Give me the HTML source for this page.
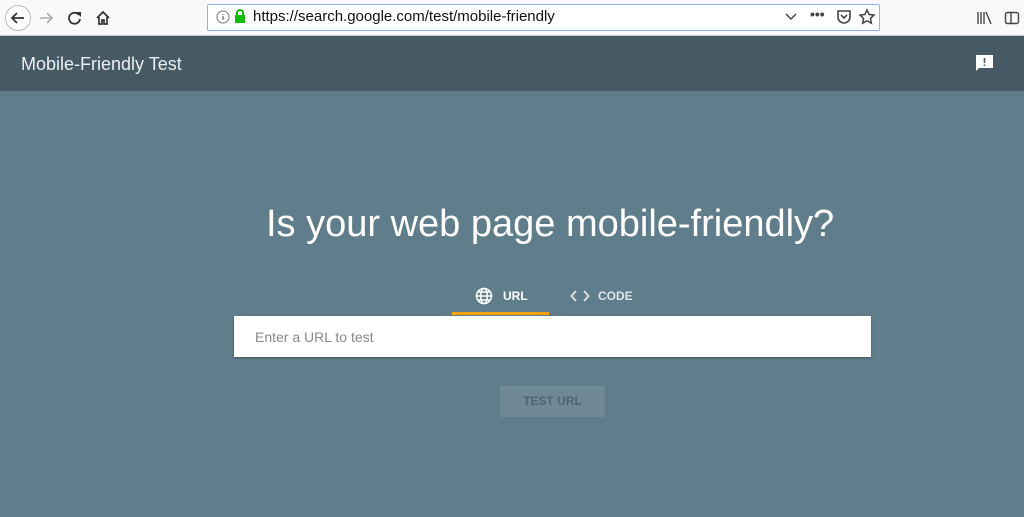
<!DOCTYPE html>
<html><head><style>
body{margin:0;width:1024px;height:517px;overflow:hidden;font-family:"Liberation Sans",sans-serif;background:#607d8b;position:relative}
.tb{position:absolute;left:0;top:0;width:1024px;height:35px;background:#f9f9fa;border-bottom:1px solid #ccc}
.url{position:absolute;left:207px;top:4px;width:671px;height:25px;border:1px solid #8bb4e6;border-radius:2px;background:#fff}
.hd{position:absolute;left:0;top:36px;width:1024px;height:55px;background:#455a64}
.ab{position:absolute}
</style></head><body>
<div class="tb">
<svg class="ab" style="left:4px;top:4px" width="28" height="28"><circle cx="14" cy="14" r="12.5" fill="#fff" stroke="#bbb"/><path d="M20 14H8M13 9l-5 5 5 5" stroke="#333" stroke-width="1.8" fill="none"/></svg>
<svg class="ab" style="left:38px;top:10px" width="16" height="16"><path d="M14 8H2M9 3l5 5-5 5" stroke="#aaa" stroke-width="1.6" fill="none"/></svg>
<svg class="ab" style="left:67px;top:10px" width="16" height="16"><path d="M12 5A5.5 5.5 0 1 0 13 9" stroke="#333" stroke-width="1.8" fill="none"/><path d="M9 2h5v5z" fill="#333"/></svg>
<svg class="ab" style="left:95px;top:10px" width="16" height="16"><path d="M2 8L8 2l6 6M4 7v7h3v-4h2v4h3V7" stroke="#333" stroke-width="1.7" fill="none"/></svg>
<div class="url">
<svg class="ab" style="left:8px;top:5px" width="14" height="14"><circle cx="7" cy="7" r="6" fill="none" stroke="#777"/><path d="M7 6v4M7 4v1" stroke="#777" stroke-width="1.4"/></svg>
<svg class="ab" style="left:26px;top:4px" width="12" height="14"><rect x="1" y="6" width="10" height="8" fill="#12bc00"/><path d="M3 6V4a3 3 0 0 1 6 0v2" stroke="#12bc00" stroke-width="2" fill="none"/></svg>
<div class="ab" style="left:45px;top:3px;font-size:15px;color:#111">https://search.google.com/test/mobile-friendly</div>
<svg class="ab" style="left:576px;top:6px" width="14" height="12"><path d="M2 3l5 5 5-5" stroke="#444" stroke-width="1.5" fill="none"/></svg>
<div class="ab" style="left:602px;top:1px;font-size:14px;color:#444;font-weight:bold">•••</div>
<svg class="ab" style="left:628px;top:4px" width="16" height="16"><path d="M2 2h12v6a6 6 0 0 1-12 0z" stroke="#444" stroke-width="1.6" fill="none"/><path d="M5 6l3 3 3-3" stroke="#444" stroke-width="1.6" fill="none"/></svg>
<svg class="ab" style="left:650px;top:3px" width="18" height="18"><path d="M9 2l2.1 4.5 4.9.6-3.6 3.3 1 4.8L9 12.8 4.6 15.2l1-4.8L2 7.1l4.9-.6z" stroke="#444" stroke-width="1.5" fill="none"/></svg>
</div>
<svg class="ab" style="left:976px;top:11px" width="16" height="14"><path d="M2 1v12M5 1v12M8 1v12M10 1l5 12" stroke="#444" stroke-width="1.4"/></svg>
<svg class="ab" style="left:1004px;top:10px" width="16" height="16"><rect x="1.5" y="2.5" width="13" height="11" rx="2" fill="none" stroke="#444" stroke-width="1.4"/><path d="M7 3v10" stroke="#444" stroke-width="1.4"/></svg>
</div>
<div class="hd">
<div class="ab" style="left:21px;top:18px;font-size:18px;color:#eceff1">Mobile-Friendly Test</div>
<svg class="ab" style="left:975px;top:18px" width="19" height="19"><path d="M1 1h17v13H4l-3 3z" fill="#fff"/><path d="M9.5 4v5M9.5 10.5v1.5" stroke="#455a64" stroke-width="1.6"/></svg>
</div>
<div class="ab" style="left:266px;top:203px;font-size:38px;color:#fff;white-space:nowrap">Is your web page mobile-friendly?</div>
<svg class="ab" style="left:475px;top:287px" width="18" height="18"><g stroke="#fff" stroke-width="1.5" fill="none"><circle cx="9" cy="9" r="7.5"/><ellipse cx="9" cy="9" rx="3.3" ry="7.5"/><path d="M1.5 9h15M3 5h12M3 13h12"/></g></svg>
<div class="ab" style="left:503px;top:289px;font-size:12px;font-weight:bold;color:#fff">URL</div>
<div class="ab" style="left:452px;top:312px;width:97px;height:3px;background:#f9a30c"></div>
<svg class="ab" style="left:570px;top:289px" width="20" height="14"><path d="M6 2L1.5 7 6 12M14 2l4.5 5L14 12" stroke="#dfe5e8" stroke-width="1.8" fill="none"/></svg>
<div class="ab" style="left:598px;top:289px;font-size:12px;font-weight:bold;color:#dfe5e8">CODE</div>
<div class="ab" style="left:234px;top:316px;width:637px;height:41px;background:#fff;box-shadow:0 1px 2px rgba(0,0,0,.35)"><div class="ab" style="left:21px;top:13px;font-size:14px;color:#888">Enter a URL to test</div></div>
<div class="ab" style="left:500px;top:386px;width:105px;height:31px;background:#6f8a96;border-radius:2px;text-align:center;line-height:31px;font-size:12px;font-weight:bold;color:#4e6570">TEST URL</div>
</body></html>
